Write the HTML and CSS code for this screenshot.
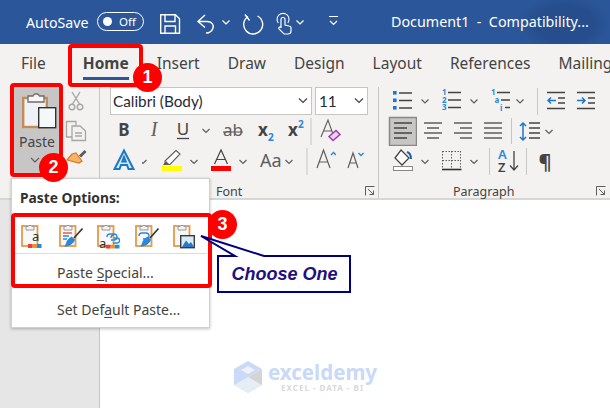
FILE: index.html
```html
<!DOCTYPE html>
<html lang="en">
<head>
<meta charset="utf-8">
<title>Document1 - Compatibility</title>
<link rel="stylesheet" href="styles.css">
</head>
<body>
<div class="app">
  <svg class="defs" width="0" height="0" aria-hidden="true">
    <defs>
      <symbol id="board" viewBox="0 0 20 26" overflow="visible">
        <rect x="1" y="3" width="15.5" height="20" fill="#f7f8fa" stroke="#e59a4a" stroke-width="1.8"/>
        <path d="M5 7V3.5h2.2a2 2 0 0 1 3.6 0H13V7z" fill="#f4f4f4" stroke="#9a9896"/>
      </symbol>
      <symbol id="swatches" viewBox="0 0 14 5">
        <rect width="4.5" height="4" fill="#e8402a"/><rect x="4.5" width="4.5" height="4" fill="#e8962c"/><rect x="9" width="4.5" height="4" fill="#2b88d8"/>
      </symbol>
      <symbol id="brush" viewBox="0 0 22 22">
        <path d="M20.5 1.5L12 11" stroke="#3b3a39" stroke-width="1.8" fill="none"/>
        <path d="M9.5 9.5l3.5 3c-1 4-6 7.500-11 7 2.500-2 2-5 3.500-6.500 1-1.500 3-2.500 4-3.500z" fill="#2b88d8"/>
      </symbol>
    </defs>
  </svg>

  <header class="titlebar">
    <span class="autosave">AutoSave</span>
    <span class="toggle"><i class="knob"></i><span class="toggle-text">Off</span></span>
    <svg class="qat" width="192" height="44" viewBox="155 0 192 44" fill="none" stroke="#fff" stroke-width="1.4">
      <path d="M160.700 14.700H175.500L179.500 18.700V33.300H160.700Z"/><path d="M165 15V21.500H175V15M165 33V26H175.500V33"/>
      <path d="M205 15L198 21.500L205 27.500M198 21.500H207C212 21.500 214 25 213 28C212 31 209 33 206 33"/>
      <path d="M222.500 20.500l3.500 3.500l3.500-3.500" stroke-width="1.2"/>
      <path d="M257.500 16A9.500 9.500 0 1 1 248 16.500M245 14.500L249.500 20.500"/>
      <path d="M278.300 23a6 6 0 1 1 9.500 0" stroke-width="1.1"/>
      <path d="M281 28V19.500a2 2 0 0 1 4 0V25l4 1a2 2 0 0 1 2 2v3a3 3 0 0 1-3 3h-4l-5-5a1.500 1.500 0 0 1 2-2z" stroke-width="1.2"/>
      <path d="M296.500 20.500l3.500 3.500l3.500-3.500" stroke-width="1.2"/>
      <path d="M329 16.500h9M330 21l3.500 3.500l3.500-3.500" stroke-width="1.2"/>
    </svg>
    <span class="doc-title">Document1&nbsp; -&nbsp; Compatibility...</span>
  </header>

  <nav class="tabs">
    <span class="tab tab-file">File</span>
    <span class="tab tab-home">Home</span>
    <span class="tab">Insert</span>
    <span class="tab">Draw</span>
    <span class="tab">Design</span>
    <span class="tab">Layout</span>
    <span class="tab">References</span>
    <span class="tab">Mailings</span>
  </nav>

  <section class="ribbon">
    <div class="group group-clipboard">
      <div class="paste">
        <svg width="46" height="45" viewBox="14 87 46 45">
          <rect x="23.200" y="98" width="23.600" height="29" fill="#eef2f6" stroke="#c58a55" stroke-width="2.400"/>
          <path d="M28 102V96h5a3.400 3.400 0 0 1 6.400 0H44v6z" fill="#f7f7f7" stroke="#6e6c6a" stroke-width="1.300"/>
          <rect x="38.700" y="107.700" width="17" height="20" fill="#f4f8fb" stroke="#323130" stroke-width="1.400"/>
        </svg>
        <span class="paste-label">Paste</span>
        <svg width="46" height="16" viewBox="14 151 46 16" fill="none" stroke="#605e5c" stroke-width="1.200"><path d="M31 158l4 4l4-4"/></svg>
      </div>
      <div class="clip-tools">
        <svg width="30" height="30" viewBox="62 87 30 30" fill="none" stroke="#a6a6a6" stroke-width="1.400">
          <path d="M72 92L79.500 104M80 92L72.500 104"/><circle cx="72" cy="107" r="2.800"/><circle cx="80" cy="107" r="2.800"/>
        </svg>
        <svg width="30" height="29" viewBox="62 117 30 29" fill="none" stroke="#a6a6a6" stroke-width="1.300">
          <path d="M66.500 121.500H76V137H66.500Z"/><path d="M72 126H80L85.500 131V140.500H72Z" fill="#f3f2f1"/><path d="M75 133h7M75 136h7"/>
        </svg>
        <svg width="30" height="26" viewBox="62 146 30 26" fill="none">
          <path d="M85.500 151L80 156.500" stroke="#605e5c" stroke-width="3"/>
          <path d="M76 153L82 161L79 163L67 160L72 154Z" fill="#f8b26a" stroke="#d87a1d" stroke-width="1.200"/>
        </svg>
      </div>
    </div>

    <div class="group group-font">
      <div class="combos">
        <span class="combo combo-face"><span class="combo-text">Calibri (Body)</span><svg width="10" height="8" viewBox="0 0 10 8" fill="none" stroke="#444" stroke-width="1.200"><path d="M1 1.500l4 4l4-4"/></svg></span>
        <span class="combo combo-size"><span class="combo-text">11</span><svg width="10" height="8" viewBox="0 0 10 8" fill="none" stroke="#444" stroke-width="1.200"><path d="M1 1.500l4 4l4-4"/></svg></span>
      </div>
      <div class="toolrow">
        <svg width="28" height="30" viewBox="110 116 28 30"><text x="124" y="136" class="t-b" text-anchor="middle">B</text></svg>
        <svg width="32" height="30" viewBox="138 116 32 30"><text x="154" y="136" class="t-i" text-anchor="middle">I</text></svg>
        <svg width="26" height="30" viewBox="170 116 26 30"><text x="183" y="135" class="t-r" text-anchor="middle">U</text><path d="M177 138.500h12" stroke="#444" stroke-width="1.300"/></svg>
        <svg width="20" height="30" viewBox="196 116 20 30" fill="none" stroke="#605e5c" stroke-width="1.200"><path d="M202.500 129l3.500 3.500l3.500-3.500"/></svg>
        <svg width="34" height="30" viewBox="216 116 34 30"><text x="233" y="136" class="t-r t-grey" text-anchor="middle">ab</text><path d="M223 132h20" stroke="#605e5c" stroke-width="1.100"/></svg>
        <svg width="30" height="30" viewBox="250 116 30 30"><text x="258" y="136" class="t-x">x</text><text x="268" y="141" class="t-s">2</text></svg>
        <svg width="30" height="30" viewBox="280 116 30 30"><text x="288" y="136" class="t-x">x</text><text x="298" y="128" class="t-s">2</text></svg>
        <svg width="2" height="30" viewBox="310 116 2 30"><path d="M311 118V145" stroke="#c8c6c4"/></svg>
        <svg width="36" height="30" viewBox="312 116 36 30" fill="none">
          <path d="M321 137L328 120L334 137M323.500 131H332" stroke="#605e5c" stroke-width="1.100"/>
          <path d="M329 136.500L336 130.500L340 134.500L333 140.500Z" fill="#e9d2ee" stroke="#a23cb4" stroke-width="1.500"/>
        </svg>
      </div>
      <div class="toolrow">
        <svg width="32" height="30" viewBox="110 146 32 30"><path d="M124 150.500L114.500 169H119.500L121 165H127L128.500 169H133.500Z M122.300 161.500L124 157L125.700 161.500Z" fill="#d5e8f8" fill-rule="evenodd" stroke="#1b78c8" stroke-width="2"/></svg>
        <svg width="16" height="30" viewBox="142 146 16 30" fill="none" stroke="#605e5c" stroke-width="1.200"><path d="M139.500 160l3.500 3.500l3.500-3.500"/></svg>
        <svg width="32" height="30" viewBox="158 146 32 30">
          <path d="M165 161L176 150.500L180 154L170 164.500H165Z" fill="#fff" stroke="#605e5c" stroke-width="1.100"/><path d="M163 165H170L166 161Z" fill="#605e5c"/>
          <rect x="162" y="166" width="20" height="5" fill="#ffff00"/>
        </svg>
        <svg width="16" height="30" viewBox="190 146 16 30" fill="none" stroke="#605e5c" stroke-width="1.200"><path d="M190.500 160l3.500 3.500l3.500-3.500"/></svg>
        <svg width="33" height="30" viewBox="206 146 33 30">
          <path d="M214.500 164L221 150L227.500 164M216.500 159.500H225.500" fill="none" stroke="#444" stroke-width="1.200"/>
          <rect x="211" y="166" width="20" height="5" fill="#ff0000"/>
        </svg>
        <svg width="16" height="30" viewBox="239 146 16 30" fill="none" stroke="#605e5c" stroke-width="1.200"><path d="M239.500 160l3.500 3.500l3.500-3.500"/></svg>
        <svg width="29" height="30" viewBox="255 146 29 30"><text x="260" y="167" class="t-r t-grey t-aa">Aa</text></svg>
        <svg width="10" height="30" viewBox="284 146 10 30" fill="none" stroke="#605e5c" stroke-width="1.200"><path d="M285.500 160l3.500 3.500l3.500-3.500"/></svg>
        <svg width="12" height="30" viewBox="294 146 12 30"></svg>
        <svg width="2" height="30" viewBox="306 146 2 30"><path d="M307 148V175" stroke="#c8c6c4"/></svg>
        <svg width="28" height="30" viewBox="308 146 28 30" fill="none">
          <path d="M317 168L323.500 150L330 168M319.500 162H327.500" stroke="#605e5c" stroke-width="1.200"/>
          <path d="M331 155l2.500-2.500l2.500 2.500" stroke="#2b88d8" stroke-width="1.400"/>
        </svg>
        <svg width="30" height="30" viewBox="336 146 30 30" fill="none">
          <path d="M348 168L353 153L358 168M349.700 163H356.300" stroke="#605e5c" stroke-width="1.200"/>
          <path d="M358.500 153l2.500 2.500l2.500-2.500" stroke="#2b88d8" stroke-width="1.400"/>
        </svg>
      </div>
      <div class="group-label label-font">
        <span>Font</span>
        <svg class="launcher" width="10" height="10" viewBox="0 0 10 10" fill="none" stroke="#605e5c"><path d="M.5 9.500V.5H9.500M3 3L8.500 8.500M8.500 4.500V8.500H4.500" /></svg>
      </div>
    </div>

    <div class="group group-para">
      <div class="toolrow">
        <svg width="46" height="30" viewBox="386 87 46 30" fill="none" stroke="#444" stroke-width="1.500">
          <rect x="393" y="91" width="3.600" height="3.600" fill="#1b78c8" stroke="none"/><rect x="393" y="98.500" width="3.600" height="3.600" fill="#1b78c8" stroke="none"/><rect x="393" y="106" width="3.600" height="3.600" fill="#1b78c8" stroke="none"/>
          <path d="M399 93h13M399 100.500h13M399 108h13"/>
          <path d="M421.500 99.500l3.500 3.500l3.500-3.500" stroke="#605e5c" stroke-width="1.200"/>
        </svg>
        <svg width="49" height="30" viewBox="432 87 49 30" fill="none" stroke="#444" stroke-width="1.500">
          <text x="442" y="95" class="t-n">1</text><text x="442" y="102.500" class="t-n">2</text><text x="442" y="110" class="t-n">3</text>
          <path d="M448 92.500h13M448 100h13M448 107.500h13"/>
          <path d="M470.500 99.500l3.500 3.500l3.500-3.500" stroke="#605e5c" stroke-width="1.200"/>
        </svg>
        <svg width="46" height="30" viewBox="481 87 46 30" fill="none" stroke="#444" stroke-width="1.500">
          <text x="491" y="95" class="t-n">1</text><text x="494.500" y="103" class="t-n">a</text><text x="500" y="111" class="t-n">i</text>
          <path d="M497 92.500h13M501 100h9M505 107.500h5"/>
          <path d="M516.500 99.500l3.500 3.500l3.500-3.500" stroke="#605e5c" stroke-width="1.200"/>
        </svg>
        <svg width="14" height="30" viewBox="527 87 14 30"><path d="M537.500 88V115" stroke="#c8c6c4"/></svg>
        <svg width="30" height="30" viewBox="541 87 30 30" fill="none" stroke="#444" stroke-width="1.500">
          <path d="M547 92.500h18M558 98h7M558 103h7M547 108.500h18"/>
          <path d="M556 100.500h-8M551 97.500l-3 3l3 3" stroke="#1b78c8"/>
        </svg>
        <svg width="30" height="30" viewBox="571 87 30 30" fill="none" stroke="#444" stroke-width="1.500">
          <path d="M577 92.500h18M588 98h7M588 103h7M577 108.500h18"/>
          <path d="M577 100.500h8M582 97.500l3 3l-3 3" stroke="#1b78c8"/>
        </svg>
      </div>
      <div class="toolrow">
        <svg width="31" height="30" viewBox="386 116 31 30" fill="none" stroke="#444" stroke-width="1.500">
          <rect x="389.500" y="117.500" width="27" height="28" fill="#c8c6c4" stroke="#8a8886"/>
          <path d="M394 123h18M394 128h13M394 133h18M394 138h13"/>
        </svg>
        <svg width="30" height="30" viewBox="417 116 30 30" fill="none" stroke="#605e5c" stroke-width="1.500"><path d="M424 123h18M427 128h12M424 133h18M427 138h12"/></svg>
        <svg width="30" height="30" viewBox="447 116 30 30" fill="none" stroke="#605e5c" stroke-width="1.500"><path d="M454 123h18M460 128h12M454 133h18M460 138h12"/></svg>
        <svg width="30" height="30" viewBox="477 116 30 30" fill="none" stroke="#605e5c" stroke-width="1.500"><path d="M484 123h18M484 128h18M484 133h18M484 138h18"/></svg>
        <svg width="8" height="30" viewBox="507 116 8 30"><path d="M511.500 118V144" stroke="#c8c6c4"/></svg>
        <svg width="41" height="30" viewBox="515 116 41 30" fill="none" stroke="#444" stroke-width="1.500">
          <path d="M523 123V140M520 126l3-3l3 3M520 137l3 3l3-3" stroke="#1b78c8"/>
          <path d="M529 123h11M529 128h11M529 133h11M529 138h11"/>
          <path d="M545.500 130l3.500 3.500l3.500-3.500" stroke="#605e5c" stroke-width="1.200"/>
        </svg>
      </div>
      <div class="toolrow">
        <svg width="46" height="30" viewBox="386 146 46 30" fill="none">
          <path d="M401 150L409 158L402 165L395 158Z" fill="#fff" stroke="#444" stroke-width="1.300"/>
          <path d="M407 152C410 153 411 156 411 159" stroke="#1b5fb0" stroke-width="2"/>
          <rect x="393.500" y="166.500" width="19" height="4" fill="#fff" stroke="#8a8886"/>
          <path d="M421.500 160l3.500 3.500l3.500-3.500" stroke="#605e5c" stroke-width="1.200"/>
        </svg>
        <svg width="49" height="30" viewBox="432 146 49 30" fill="none" stroke="#605e5c">
          <path d="M442.500 151.500h18M442.500 160.500h18M451.500 151v18M442.500 151v18M460.500 151v18" stroke-dasharray="1.500 1.500"/>
          <path d="M442 169.500h19.500" stroke="#323130" stroke-width="1.600"/>
          <path d="M470.500 160l3.500 3.500l3.500-3.500" stroke-width="1.200"/>
        </svg>
        <svg width="12" height="30" viewBox="481 146 12 30"><path d="M489.500 148V175" stroke="#c8c6c4"/></svg>
        <svg width="29" height="30" viewBox="493 146 29 30" fill="none">
          <text x="498" y="159" class="t-sort t-sort-a">A</text><text x="498" y="172" class="t-sort">Z</text>
          <path d="M514 151V170M510 165.500l4 4.500l4-4.500" stroke="#444" stroke-width="1.300"/>
        </svg>
        <svg width="8" height="30" viewBox="522 146 8 30"><path d="M526.500 148V175" stroke="#c8c6c4"/></svg>
        <svg width="30" height="30" viewBox="530 146 30 30"><text x="545" y="169" class="t-b t-pil" text-anchor="middle">¶</text></svg>
      </div>
      <div class="group-label label-para">
        <span>Paragraph</span>
        <svg class="launcher" width="10" height="10" viewBox="0 0 10 10" fill="none" stroke="#605e5c"><path d="M.5 9.500V.5H9.500M3 3L8.500 8.500M8.500 4.500V8.500H4.500" /></svg>
      </div>
    </div>
  </section>

  <main class="workspace">
    <div class="gutter"></div>
    <div class="page"></div>
  </main>

  <div class="menu">
    <div class="menu-head">Paste Options:</div>
    <div class="menu-icons">
      <svg width="38" height="28" viewBox="0 0 38 28">
        <use href="#board" x="0" y="0" width="20" height="26"/>
        <text x="11" y="18" class="t-pa">a</text>
        <use href="#swatches" x="7" y="21" width="14" height="5"/>
      </svg>
      <svg width="38" height="28" viewBox="0 0 38 28">
        <use href="#board" x="0" y="0" width="20" height="26"/>
        <path d="M4 10h9" stroke="#e8402a" stroke-width="1.300"/><path d="M4 13h6M4 16h4" stroke="#2b88d8" stroke-width="1.300"/>
        <use href="#brush" x="3" y="4" width="22" height="22"/>
      </svg>
      <svg width="38" height="28" viewBox="0 0 38 28">
        <use href="#board" x="0" y="0" width="20" height="26"/>
        <text x="2" y="25" class="t-pa">a</text>
        <path d="M10 14a3 3 0 0 1 3-3h4a3 3 0 0 1 0 6h-3" fill="none" stroke="#2b88d8" stroke-width="1.300"/>
        <path d="M14 15a3 3 0 0 1 3-3M17 15h3a2.500 2.500 0 0 1 0 5h-4" fill="none" stroke="#2b88d8" stroke-width="1.300"/>
        <use href="#swatches" x="9" y="21.500" width="14" height="5"/>
      </svg>
      <svg width="38" height="28" viewBox="0 0 38 28">
        <use href="#board" x="0" y="0" width="20" height="26"/>
        <path d="M4 13a3 3 0 0 1 3-3h4a3 3 0 0 1 0 6H8" fill="none" stroke="#2b88d8" stroke-width="1.300"/>
        <use href="#brush" x="3" y="4" width="22" height="22"/>
      </svg>
      <svg width="38" height="28" viewBox="0 0 38 28">
        <use href="#board" x="0" y="0" width="20" height="26"/>
        <rect x="7.700" y="12.700" width="13.600" height="12" fill="#d8ebf8" stroke="#3b3a39" stroke-width="1.400"/>
        <path d="M9 24L13 17.500L16 21L18 19L21 24Z" fill="#2b78c8"/>
      </svg>
    </div>
    <div class="menu-item"><span>Paste <u>S</u>pecial...</span></div>
    <div class="menu-item menu-item-last"><span>Set Def<u>a</u>ult Paste...</span></div>
  </div>

  <div class="mark mark-home"></div>
  <div class="mark mark-paste"></div>
  <div class="mark mark-options"></div>
  <span class="badge badge-1">1</span>
  <span class="badge badge-2">2</span>
  <span class="badge badge-3">3</span>

  <svg class="callout" width="154" height="62" viewBox="199 234 154 62">
    <path d="M218 256H235L201 236L264 256H350V292H218Z" fill="#fff" stroke="#000080" stroke-width="2"/>
    <text x="284.500" y="280" class="callout-text" text-anchor="middle">Choose One</text>
  </svg>

  <div class="watermark">
    <svg width="30" height="33" viewBox="0 0 30 33">
      <path d="M14 0L0 8V24L14 32L14 16L28 8Z" fill="#c9d9f7"/>
      <path d="M14 16L28 8V24L14 32Z" fill="#d4d4d4"/>
      <path d="M14 5L21 9L14 13L7 9Z" fill="#f0f2f6"/>
      <path d="M0 24L14 16L28 24L14 32Z" fill="#e4eef4"/>
    </svg>
    <div class="wm-text">
      <span class="wm-name">exceldemy</span>
      <span class="wm-sub">EXCEL - DATA - BI</span>
    </div>
  </div>
</div>
</body>
</html>
```

FILE: styles.css
```css
* { box-sizing: border-box; }
html, body { margin: 0; padding: 0; }
body { width: 610px; height: 408px; overflow: hidden; background: #fff; font-family: "Noto Sans", "Open Sans", sans-serif; }
svg { display: block; flex: none; overflow: hidden; }
.app { position: relative; width: 610px; height: 408px; overflow: hidden; }
.defs { position: absolute; }

.titlebar {
  height: 44px; display: flex; align-items: center; color: #fff;
  padding-left: 26px;
  background: radial-gradient(ellipse 48px 30px at 565px 24px, #264e8c 60%, rgba(38,78,140,0)), #2b579a;
}
.autosave { width: 71px; font-size: 14.2px; }
.toggle {
  width: 47px; height: 19px; border: 1.3px solid #fff; border-radius: 10px;
  display: flex; align-items: center; padding-left: 5px; gap: 7px; margin-top: -1px;
}
.knob { width: 9px; height: 9px; border-radius: 50%; background: #fff; }
.toggle-text { font-size: 11.5px; line-height: 1; }
.qat { margin-left: 11px; }
.doc-title { margin-left: 44px; font-size: 14.3px; white-space: pre; position: relative; top: -1px; }

.tabs {
  height: 43px; display: flex; align-items: center; padding: 0 0 0 7px;
  background: #f3f2f1; white-space: nowrap; font-size: 15.5px; color: #444;
}
.tab { padding: 0 14px; line-height: 20px; margin-bottom: 6px; }
.tab-file { margin-right: 9px; }
.tab-home { font-weight: 700; color: #444; position: relative; }
.tab-home::after {
  content: ""; position: absolute; left: 14px; right: 14px; top: 24px; height: 3px; background: #2b579a;
}

.ribbon { height: 113px; display: flex; background: #f3f2f1; border-bottom: 2px solid #d8d6d4; }
.group { flex: none; height: 111px; }
.group-clipboard { width: 100px; display: flex; padding-left: 14px; border-right: 1px solid #c8c6c4; }
.paste {
  width: 46px; height: 88px; background: #c8c6c4; display: flex; flex-direction: column; align-items: center;
}
.paste-label { font-size: 14px; line-height: 19px; color: #444; }
.clip-tools { margin-left: 2px; }

.group-font { width: 279px; padding-left: 10px; border-right: 1px solid #c8c6c4; }
.group-para { width: 231px; padding-left: 7px; }
.combos { height: 29px; display: flex; gap: 3px; }
.combo {
  height: 28px; background: #fff; border: 1px solid #c8c6c4; display: flex; align-items: center;
  justify-content: space-between; padding: 0 3px 0 2px;
}
.combo-face { width: 202px; }
.combo-size { width: 53px; padding-left: 3px; }
.combo-text { font-family: "Lato", "Noto Sans", sans-serif; font-size: 15.3px; color: #1f2a3a; }
.toolrow { display: flex; height: 30px; }
.group-para .toolrow:first-child { height: 29px; }
.group-label {
  height: 22px; padding-top: 8px; display: flex; align-items: center; font-size: 12.5px; color: #444;
}
.label-font { padding-left: 106px; }
.label-para { padding-left: 67px; }
.label-font .launcher { margin-left: 123px; }
.label-para .launcher { margin-left: 81px; }

.t-b { font-family: "Noto Sans", sans-serif; font-weight: 700; font-size: 17px; fill: #444; }
.t-i { font-family: "Liberation Serif", serif; font-style: italic; font-size: 20px; fill: #605e5c; }
.t-r { font-family: "Noto Sans", sans-serif; font-size: 17px; fill: #444; }
.t-grey { fill: #605e5c; }
.t-aa { font-size: 18px; }
.t-x { font-family: "Noto Sans", sans-serif; font-weight: 700; font-size: 17px; fill: #444; }
.t-s { font-family: "Noto Sans", sans-serif; font-weight: 700; font-size: 10px; fill: #2b88d8; }
.t-n { font-family: "Noto Sans", sans-serif; font-weight: 700; font-size: 8px; fill: #2b88d8; stroke: none; }
.t-sort { font-family: "Noto Sans", sans-serif; font-size: 13px; font-weight: 600; fill: #444; }
.t-sort-a { fill: #2b88d8; }
.t-pil { font-size: 20px; }

.workspace { display: flex; height: 208px; }
.gutter { width: 100px; background: #e6e6e6; border-right: 1px solid #c8c6c4; }
.page { flex: 1; background: #fff; }

.menu {
  position: absolute; left: 11px; top: 178px; width: 199px; height: 150px; background: #fff;
  border: 1px solid #d0d0d0; box-shadow: 0 1px 3px rgba(0,0,0,.25); color: #444; font-size: 14px;
}
.menu-head { padding: 9px 0 0 8px; height: 35px; font-size: 13.8px; line-height: 20px; font-weight: 700; color: #323130; }
.menu-icons { display: flex; padding: 9px 0 0 6px; height: 40px; border-bottom: 1px solid #dcdcdc; margin: 0 2px 0 3px; }
.menu-item { padding-left: 45px; height: 37px; display: flex; align-items: center; }
.menu-item-last { height: 36px; }
u { text-underline-offset: 2px; }

.t-pa { font-family: "Noto Sans", sans-serif; font-size: 13px; fill: #323130; }

.mark { position: absolute; border: 4px solid #f00; border-radius: 4px; }
.mark-home { left: 68px; top: 44px; width: 75px; height: 43px; }
.mark-paste { left: 10px; top: 83px; width: 53px; height: 94px; }
.mark-options { left: 11px; top: 213px; width: 201px; height: 75px; }
.badge {
  position: absolute; width: 29px; height: 29px; border-radius: 50%; background: #f00; color: #fff;
  font-family: "Liberation Sans", Arial, sans-serif; font-weight: 700; font-size: 18px;
  display: flex; align-items: center; justify-content: center;
}
.badge-1 { left: 133px; top: 63px; }
.badge-2 { left: 39px; top: 153px; }
.badge-3 { left: 208px; top: 210px; }

.callout { position: absolute; left: 199px; top: 234px; }
.callout-text { font-family: "Liberation Sans", Arial, sans-serif; font-weight: 700; font-style: italic; font-size: 18px; fill: #1f0f80; }

.watermark { position: absolute; left: 234px; top: 361px; display: flex; gap: 4px; }
.wm-text { display: flex; flex-direction: column; align-items: center; }
.wm-name { font-family: "Noto Sans", sans-serif; font-weight: 700; font-size: 20.5px; line-height: 22px; color: #c9d9f7; }
.wm-sub { font-family: "Noto Sans", sans-serif; font-weight: 700; font-size: 8px; letter-spacing: 1px; line-height: 10px; color: #d9d9d9; }
```
